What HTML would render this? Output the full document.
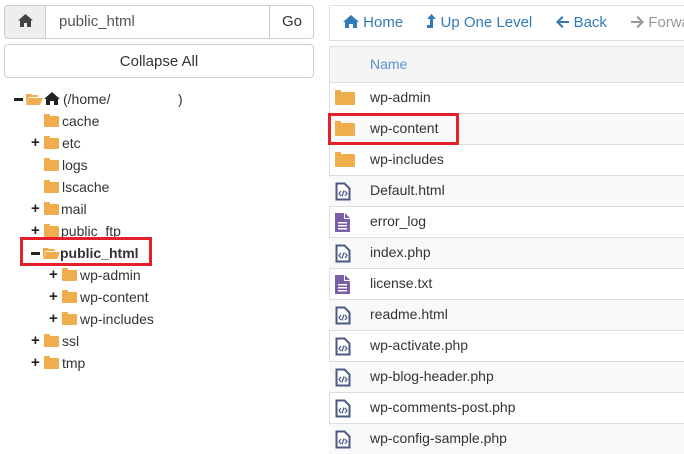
<!DOCTYPE html>
<html><head><meta charset="utf-8"><style>
*{box-sizing:border-box;margin:0;padding:0}
body{width:684px;height:453px;overflow:hidden;background:#fff;font-family:"Liberation Sans",sans-serif;color:#333;position:relative}
.a{position:absolute}
.fold{position:absolute;width:15px;height:11px;background:#f0ad4e;border-radius:1px}
.fold:before{content:"";position:absolute;left:0;top:-2px;width:6px;height:3px;background:#f0ad4e;border-radius:1px 1px 0 0}
.t{position:absolute;font-size:14px;line-height:18px;color:#333}
.pm{position:absolute;font-weight:bold;font-size:15px;line-height:18px;color:#222}
.row{position:absolute;left:329px;width:355px;height:31px;border-top:1px solid #ddd;font-size:14px}
.row span{position:absolute;left:41px;top:6px}
.row .fold{left:6px;top:9px;width:20px;height:13px}
.g{background:#f9f9f9}
</style></head><body>
<div class="a" style="left:4px;top:5px;width:310px;height:34px;border:1px solid #ccc;border-radius:4px"></div>
<div class="a" style="left:5px;top:6px;width:41px;height:32px;background:#eee;border-right:1px solid #ccc;border-radius:3px 0 0 3px"></div>
<svg class="a" style="left:18px;top:14px" width="15" height="13" viewBox="0 0 15 13"><path d="M7.5 0L0 6.5h2V13h4V9h3v4h4V6.5h2z" fill="#444"/></svg>
<div class="t" style="left:59px;top:13px;font-size:15px;color:#555">public_html</div>
<div class="a" style="left:269px;top:6px;width:1px;height:32px;background:#ccc"></div>
<div class="t" style="left:282px;top:13px;font-size:15px">Go</div>
<div class="a" style="left:4px;top:44px;width:310px;height:34px;border:1px solid #ccc;border-radius:4px"></div>
<div class="t" style="left:0;width:318px;text-align:center;top:53px;font-size:15px">Collapse All</div>
<div class="a" style="left:14px;top:98px;width:9px;height:3px;background:#222"></div>
<svg class="a" style="left:26px;top:93px" width="17" height="12" viewBox="0 0 17 12"><path d="M0 1h5l1 1h6v2H3L0 11z M3 5h14l-3 7H0z" fill="#f0ad4e"/></svg>
<svg class="a" style="left:44px;top:92px" width="16" height="13" viewBox="0 0 16 13"><path d="M8 0L0 7h2v6h4V9h4v4h4V7h2z" fill="#222"/></svg>
<div class="t" style="left:63px;top:90px">(/home/</div>
<div class="t" style="left:178px;top:90px">)</div>

<div class="fold" style="left:44px;top:116px"></div><div class="t" style="left:62px;top:112px">cache</div>
<div class="pm" style="left:31px;top:134px">+</div><div class="fold" style="left:44px;top:138px"></div><div class="t" style="left:62px;top:134px">etc</div>
<div class="fold" style="left:44px;top:160px"></div><div class="t" style="left:62px;top:156px">logs</div>
<div class="fold" style="left:44px;top:182px"></div><div class="t" style="left:62px;top:178px">lscache</div>
<div class="pm" style="left:31px;top:200px">+</div><div class="fold" style="left:44px;top:204px"></div><div class="t" style="left:61px;top:200px">mail</div>
<div class="pm" style="left:31px;top:222px">+</div><div class="fold" style="left:44px;top:226px"></div><div class="t" style="left:61px;top:222px">public_ftp</div>
<div class="a" style="left:31px;top:252px;width:9px;height:3px;background:#222"></div>
<svg class="a" style="left:43px;top:247px" width="17" height="12" viewBox="0 0 17 12"><path d="M0 1h5l1 1h6v2H3L0 11z M3 5h14l-3 7H0z" fill="#f0ad4e"/></svg>
<div class="t" style="left:60px;top:244px;font-weight:bold">public_html</div>
<div class="a" style="left:20px;top:237px;width:132px;height:29px;border:3px solid #e4202a"></div>
<div class="pm" style="left:49px;top:266px">+</div><div class="fold" style="left:62px;top:270px"></div><div class="t" style="left:80px;top:266px">wp-admin</div>
<div class="pm" style="left:49px;top:288px">+</div><div class="fold" style="left:62px;top:292px"></div><div class="t" style="left:80px;top:288px">wp-content</div>
<div class="pm" style="left:49px;top:310px">+</div><div class="fold" style="left:62px;top:314px"></div><div class="t" style="left:80px;top:310px">wp-includes</div>
<div class="pm" style="left:31px;top:332px">+</div><div class="fold" style="left:44px;top:336px"></div><div class="t" style="left:62px;top:332px">ssl</div>
<div class="pm" style="left:31px;top:354px">+</div><div class="fold" style="left:44px;top:358px"></div><div class="t" style="left:62px;top:354px">tmp</div>
<div class="a" style="left:329px;top:5px;width:360px;height:36px;border:1px solid #ddd"></div>
<div class="a" style="left:343px;top:14px;font-size:15px;color:#337ab7;white-space:nowrap">
<svg width="16" height="13" viewBox="0 0 16 13" style="vertical-align:-1px"><path d="M8 0L0 7h2v6h4V9h4v4h4V7h2z" fill="#337ab7"/></svg> Home
<span style="margin-left:20px"><svg width="9" height="14" viewBox="0 0 9 14" style="vertical-align:-1px"><path d="M4.5 0L0 5h3v6H0v3h6V5h3z" fill="#337ab7"/></svg> Up One Level</span>
<span style="margin-left:20px"><svg width="13" height="12" viewBox="0 0 13 12" style="vertical-align:-1px"><path d="M0 6l6-6 1.5 1.5L4 5h9v2H4l3.5 3.5L6 12z" fill="#337ab7"/></svg> Back</span>
<span style="margin-left:20px;color:#999"><svg width="13" height="12" viewBox="0 0 13 12" style="vertical-align:-1px"><path d="M13 6L7 0 5.5 1.5 9 5H0v2h9l-3.5 3.5L7 12z" fill="#999"/></svg> Forward</span>
</div>
<div class="a" style="left:329px;top:46px;width:355px;height:36px;background:#f5f5f5;border-top:1px solid #ddd;border-left:1px solid #ddd"></div>
<div class="a" style="left:370px;top:56px;font-size:14px;color:#5b8fd0">Name</div>
<div class="a" style="left:329px;top:82px;width:1px;height:371px;background:#ddd"></div>
<div class="row" style="top:82px"><div class="fold"></div><span>wp-admin</span></div>
<div class="row g" style="top:113px"><div class="fold"></div><span>wp-content</span></div>
<div class="row" style="top:144px"><div class="fold"></div><span>wp-includes</span></div>
<div class="row g" style="top:175px"><svg class="a" style="left:6px;top:6px" width="16" height="19" viewBox="0 0 16 19"><path d="M1.5 1.5h8l5 5v11h-13z" fill="#fff" stroke="#4a5a86" stroke-width="2"/><path d="M6 9l-2 2.5 2 2.5M10 9l2 2.5-2 2.5M9 8.5l-2 6" fill="none" stroke="#4a5a86" stroke-width="1.2"/></svg><span>Default.html</span></div>
<div class="row" style="top:206px"><svg class="a" style="left:6px;top:6px" width="15" height="19" viewBox="0 0 15 19"><path d="M0 0h9v6h6v13H0z M10 0l5 5h-5z" fill="#7b5ea7"/><path d="M3 9h9v1.5H3zM3 12h9v1.5H3zM3 15h9v1.5H3z" fill="#fff"/></svg><span>error_log</span></div>
<div class="row g" style="top:237px"><svg class="a" style="left:6px;top:6px" width="16" height="19" viewBox="0 0 16 19"><path d="M1.5 1.5h8l5 5v11h-13z" fill="#fff" stroke="#4a5a86" stroke-width="2"/><path d="M6 9l-2 2.5 2 2.5M10 9l2 2.5-2 2.5M9 8.5l-2 6" fill="none" stroke="#4a5a86" stroke-width="1.2"/></svg><span>index.php</span></div>
<div class="row" style="top:268px"><svg class="a" style="left:6px;top:6px" width="15" height="19" viewBox="0 0 15 19"><path d="M0 0h9v6h6v13H0z M10 0l5 5h-5z" fill="#7b5ea7"/><path d="M3 9h9v1.5H3zM3 12h9v1.5H3zM3 15h9v1.5H3z" fill="#fff"/></svg><span>license.txt</span></div>
<div class="row g" style="top:299px"><svg class="a" style="left:6px;top:6px" width="16" height="19" viewBox="0 0 16 19"><path d="M1.5 1.5h8l5 5v11h-13z" fill="#fff" stroke="#4a5a86" stroke-width="2"/><path d="M6 9l-2 2.5 2 2.5M10 9l2 2.5-2 2.5M9 8.5l-2 6" fill="none" stroke="#4a5a86" stroke-width="1.2"/></svg><span>readme.html</span></div>
<div class="row" style="top:330px"><svg class="a" style="left:6px;top:6px" width="16" height="19" viewBox="0 0 16 19"><path d="M1.5 1.5h8l5 5v11h-13z" fill="#fff" stroke="#4a5a86" stroke-width="2"/><path d="M6 9l-2 2.5 2 2.5M10 9l2 2.5-2 2.5M9 8.5l-2 6" fill="none" stroke="#4a5a86" stroke-width="1.2"/></svg><span>wp-activate.php</span></div>
<div class="row g" style="top:361px"><svg class="a" style="left:6px;top:6px" width="16" height="19" viewBox="0 0 16 19"><path d="M1.5 1.5h8l5 5v11h-13z" fill="#fff" stroke="#4a5a86" stroke-width="2"/><path d="M6 9l-2 2.5 2 2.5M10 9l2 2.5-2 2.5M9 8.5l-2 6" fill="none" stroke="#4a5a86" stroke-width="1.2"/></svg><span>wp-blog-header.php</span></div>
<div class="row" style="top:392px"><svg class="a" style="left:6px;top:6px" width="16" height="19" viewBox="0 0 16 19"><path d="M1.5 1.5h8l5 5v11h-13z" fill="#fff" stroke="#4a5a86" stroke-width="2"/><path d="M6 9l-2 2.5 2 2.5M10 9l2 2.5-2 2.5M9 8.5l-2 6" fill="none" stroke="#4a5a86" stroke-width="1.2"/></svg><span>wp-comments-post.php</span></div>
<div class="row g" style="top:423px"><svg class="a" style="left:6px;top:6px" width="16" height="19" viewBox="0 0 16 19"><path d="M1.5 1.5h8l5 5v11h-13z" fill="#fff" stroke="#4a5a86" stroke-width="2"/><path d="M6 9l-2 2.5 2 2.5M10 9l2 2.5-2 2.5M9 8.5l-2 6" fill="none" stroke="#4a5a86" stroke-width="1.2"/></svg><span>wp-config-sample.php</span></div>
<div class="a" style="left:328px;top:113px;width:131px;height:32px;border:3px solid #e4202a"></div>
</body></html>
